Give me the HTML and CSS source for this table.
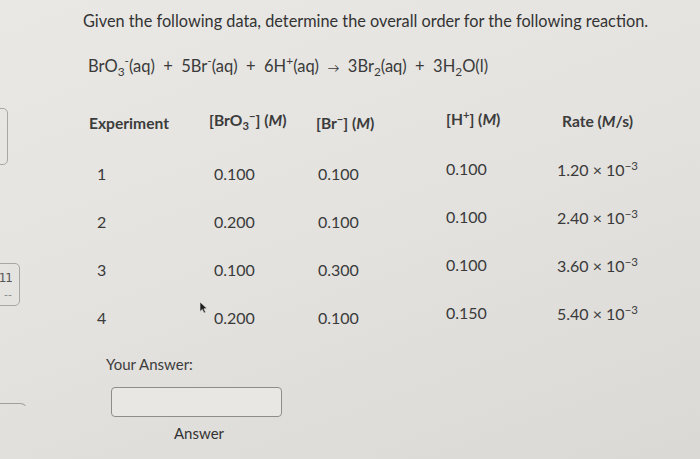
FILE: index.html
```html
<!DOCTYPE html>
<html>
<head>
<meta charset="utf-8">
<link rel="stylesheet" href="styles.css">
</head>
<body>
<div class="page">
  <aside class="side">
    <div class="tab tab-a"></div>
    <div class="tab tab-b"><span class="num">11</span><span class="dash">--</span></div>
    <div class="tab tab-c"></div>
  </aside>
  <main class="main">
    <p class="title">Given the following data, determine the overall order for the following reaction.</p>
    <p class="eq">BrO<sub>3</sub><sup>-</sup>(aq) &nbsp;+ &nbsp;5Br<sup>-</sup>(aq) &nbsp;+ &nbsp;6H<sup>+</sup>(aq) &nbsp;<span class="arrow">&rarr;</span> &nbsp;3Br<sub>2</sub>(aq) &nbsp;+ &nbsp;3H<sub>2</sub>O(l)</p>
    <div class="table">
      <div class="th c1">Experiment</div>
      <div class="th c2">[BrO<sub>3</sub><sup>&minus;</sup>] (<i>M</i>)</div>
      <div class="th c3">[Br<sup>&minus;</sup>] (<i>M</i>)</div>
      <div class="th c4">[H<sup>+</sup>] (<i>M</i>)</div>
      <div class="th c5">Rate (<i>M</i>/s)</div>

      <div class="td c1">1</div>
      <div class="td c2">0.100</div>
      <div class="td c3">0.100</div>
      <div class="td c4">0.100</div>
      <div class="td c5">1.20 &times; 10<sup>&minus;3</sup></div>

      <div class="td c1">2</div>
      <div class="td c2">0.200</div>
      <div class="td c3">0.100</div>
      <div class="td c4">0.100</div>
      <div class="td c5">2.40 &times; 10<sup>&minus;3</sup></div>

      <div class="td c1">3</div>
      <div class="td c2">0.100</div>
      <div class="td c3">0.300</div>
      <div class="td c4">0.100</div>
      <div class="td c5">3.60 &times; 10<sup>&minus;3</sup></div>

      <div class="td c1">4</div>
      <div class="td c2 cursor-cell"><svg class="cursor" width="9" height="13" viewBox="0 0 9 13"><path d="M1 1 L1 10.5 L3.3 8.4 L5 12 L6.6 11.3 L4.9 7.8 L8 7.6 Z" fill="#1e1e1e" stroke="#e6e5e2" stroke-width="0.6"/></svg>0.200</div>
      <div class="td c3">0.100</div>
      <div class="td c4">0.150</div>
      <div class="td c5">5.40 &times; 10<sup>&minus;3</sup></div>
    </div>
    <div class="answer">
      <div class="label">Your Answer:</div>
      <div class="input"></div>
      <div class="caption">Answer</div>
    </div>
  </main>
</div>
</body>
</html>
```
FILE: styles.css
```css
* { box-sizing: border-box; }
html, body { margin: 0; padding: 0; }
body {
  width: 700px;
  height: 459px;
  overflow: hidden;
  font-family: Lato, "Noto Sans", sans-serif;
  color: #3a3a3a;
  background: linear-gradient(160deg, #e9e8e5 0%, #e4e3e0 45%, #dad9d6 100%);
}
.page {
  display: flex;
  height: 459px;
}
.side {
  width: 30px;
  flex: none;
  overflow: hidden;
  display: flex;
  flex-direction: column;
}
.tab {
  flex: none;
  border: 1.5px solid #a8a7a4;
  border-radius: 5px;
}
.tab-a {
  width: 40px;
  height: 57px;
  margin: 108px 0 0 -32px;
}
.tab-b {
  width: 40px;
  height: 43px;
  margin: 98px 0 0 -20px;
  display: flex;
  flex-direction: column;
  align-items: flex-end;
  padding-right: 7px;
  font-family: "DejaVu Sans", sans-serif;
  color: #555;
}
.tab-b .num { font-size: 12px; line-height: 14px; margin-top: 7px; letter-spacing: -1px; }
.tab-b .dash { font-size: 11px; line-height: 12px; margin-top: 4px; color: #888; }
.tab-c {
  width: 60px;
  height: 80px;
  margin: 97px 0 0 -32px;
  border-color: #a09f9c transparent transparent transparent;
  border-radius: 8px;
}
.main {
  flex: 1;
  padding: 10px 0 0 53px;
}
.title {
  margin: 0;
  font-size: 16.3px;
  line-height: 22px;
  color: #333;
}
.eq {
  margin: 24px 0 0 5px;
  font-size: 16.5px;
  line-height: 20px;
  color: #3a3a3a;
}
sub, sup { font-size: 0.72em; line-height: 0; }
sub { vertical-align: -0.35em; }
sup { vertical-align: 0.55em; }
.arrow { font-size: 12px; }
.table {
  display: grid;
  grid-template-columns: 120px 107px 130px 116px 100px;
  grid-template-rows: 52px repeat(4, 48px);
  margin: 19px 0 0 6px;
  font-size: 16px;
  align-items: center;
}
.th {
  font-weight: 700;
  color: #3c3c3c;
  font-size: 15.6px;
}
.th i, .td i { font-style: italic; }
.td { color: #3a3a3a; }
.td.c1 { padding-left: 8px; }
.td.c2 { padding-left: 5px; }
.td.c3 { padding-left: 2px; }
.td.c4 { padding-left: 0; margin-top: -10px; }
.td.c5 { margin-left: -5px; margin-top: -8px; }
.th.c2 { margin-top: -6px; }
.th.c4 { margin-top: -8px; }
.th.c5 { margin-top: -4px; }
.cursor-cell { position: relative; }
.cursor {
  position: absolute;
  left: -10px;
  top: -7px;
}
.answer {
  margin: 13px 0 0 23px;
  display: flex;
  flex-direction: column;
  align-items: flex-start;
}
.label {
  font-size: 15px;
  line-height: 20px;
  color: #3c3c3c;
}
.input {
  margin: 13px 0 0 5px;
  width: 171px;
  height: 30px;
  border: 1.5px solid #8e8d8a;
  border-radius: 4px;
  background: #e8e7e4;
}
.caption {
  margin: 6px 0 0 68px;
  font-size: 15px;
  line-height: 20px;
  color: #333;
}
```
